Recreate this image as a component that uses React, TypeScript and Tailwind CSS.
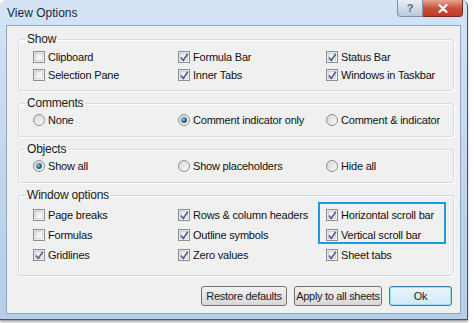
import type { ReactNode } from "react";

const font = { fontFamily: '"Liberation Sans", Arial, sans-serif' };

function CheckBox({ checked }: { checked: boolean }) {
  return (
    <span className="flex h-[12px] w-[12px] shrink-0 items-center justify-center border border-[#8e8f8f] bg-gradient-to-br from-[#dcdcdc] to-[#fbfbfb] p-[1px]">
      <span className="flex h-full w-full items-center justify-center border border-[#d4d4d4] bg-gradient-to-br from-[#e8e8e8] to-[#ffffff]">
        {checked ? (
          <svg width="9" height="9" viewBox="0 0 9 9" className="overflow-visible">
            <path d="M1 4.6 L3.3 7.4 L7.8 0.8" fill="none" stroke="#4a5f97" strokeWidth="1.6" />
          </svg>
        ) : null}
      </span>
    </span>
  );
}

function Radio({ checked }: { checked: boolean }) {
  return (
    <span className="flex h-[12px] w-[12px] shrink-0 items-center justify-center rounded-full border border-[#8e8f8f] bg-gradient-to-br from-[#d6d6d6] to-[#fbfbfb]">
      {checked ? (
        <span className="h-[6px] w-[6px] rounded-full bg-[radial-gradient(circle_at_35%_35%,#7fc7ea,#1b5f86_60%,#0f3d5a)]" />
      ) : null}
    </span>
  );
}

function Item({ label, checked, radio }: { label: string; checked: boolean; radio?: boolean }) {
  return (
    <div className="flex items-center gap-[3px] whitespace-nowrap">
      {radio ? <Radio checked={checked} /> : <CheckBox checked={checked} />}
      <span>{label}</span>
    </div>
  );
}

function Group({ title, className, children }: { title: string; className: string; children: ReactNode }) {
  return (
    <fieldset
      className={`rounded-[3px] border border-[#d5dde2] px-0 shadow-[inset_1px_1px_0_#ffffff,1px_1px_0_#ffffff] ${className}`}
    >
      <legend className="ml-[6px] px-[2px] text-[12px] leading-[14px] text-[#1a1a1a]">{title}</legend>
      {children}
    </fieldset>
  );
}

const cols = "grid grid-cols-[145px_148px_1fr] pl-[14px]";
const btn =
  "h-[20px] whitespace-nowrap rounded-[3px] border px-0 text-[11px] tracking-[-0.3px] text-[#222]";

export default function App() {
  return (
    <div
      className="h-[323px] w-[474px] overflow-hidden bg-white text-[11px] tracking-[-0.2px] text-[#111]"
      style={font}
    >
      <div className="flex h-[320px] w-[468px] flex-col rounded-t-[6px] border-r border-b border-[#4a5563] bg-gradient-to-b from-[#d4e4f5] via-[#c2d6ee] to-[#b6cde8] shadow-[0_2px_2px_rgba(0,0,0,0.35)]">
        <div className="flex h-[25px] shrink-0 items-start justify-between">
          <span className="pl-[7px] pt-[6px] text-[12px] leading-[14px] tracking-normal text-[#1e2838]">View Options</span>
          <div className="mr-[4px] flex">
            <div className="flex h-[17px] w-[26px] items-center justify-center rounded-bl-[4px] border border-t-0 border-[#7c8ea8] bg-gradient-to-b from-[#e7eef7] to-[#b9c9dd] text-[11px] font-bold text-[#5a6a80]">
              ?
            </div>
            <div className="flex h-[17px] w-[40px] items-center justify-center rounded-br-[4px] border border-t-0 border-l-0 border-[#7a2a20] bg-gradient-to-b from-[#e8a493] via-[#c7523c] to-[#c23a22]">
              <svg width="10" height="9" viewBox="0 0 10 9">
                <path d="M1.5 1 L8.5 8 M8.5 1 L1.5 8" stroke="#ffffff" strokeWidth="2.2" strokeLinecap="round" />
              </svg>
            </div>
          </div>
        </div>

        <div className="mx-[6px] mb-[5px] flex flex-1 flex-col border border-[#8ea7c4] bg-[#f0f0f0] pl-[11px] pr-[6px] pt-[6px]">
          <Group title="Show" className="h-[59px]">
            <div className={`${cols} pt-[2px]`}>
              <div className="flex h-[18px] items-center"><Item label="Clipboard" checked={false} /></div>
              <div className="flex h-[18px] items-center"><Item label="Formula Bar" checked /></div>
              <div className="flex h-[18px] items-center"><Item label="Status Bar" checked /></div>
              <div className="flex h-[18px] items-center"><Item label="Selection Pane" checked={false} /></div>
              <div className="flex h-[18px] items-center"><Item label="Inner Tabs" checked /></div>
              <div className="flex h-[18px] items-center"><Item label="Windows in Taskbar" checked /></div>
            </div>
          </Group>

          <Group title="Comments" className="mt-[5px] h-[41px]">
            <div className={`${cols} pt-[1px]`}>
              <div className="flex h-[18px] items-center"><Item radio label="None" checked={false} /></div>
              <div className="flex h-[18px] items-center"><Item radio label="Comment indicator only" checked /></div>
              <div className="flex h-[18px] items-center"><Item radio label="Comment & indicator" checked={false} /></div>
            </div>
          </Group>

          <Group title="Objects" className="mt-[5px] h-[41px]">
            <div className={`${cols} pt-[1px]`}>
              <div className="flex h-[18px] items-center"><Item radio label="Show all" checked /></div>
              <div className="flex h-[18px] items-center"><Item radio label="Show placeholders" checked={false} /></div>
              <div className="flex h-[18px] items-center"><Item radio label="Hide all" checked={false} /></div>
            </div>
          </Group>

          <Group title="Window options" className="mt-[5px] h-[88px]">
            <div className="relative pt-[3px]">
              <div className={cols}>
                <div className="flex h-[20px] items-center"><Item label="Page breaks" checked={false} /></div>
                <div className="flex h-[20px] items-center"><Item label="Rows & column headers" checked /></div>
                <div className="flex h-[20px] items-center"><Item label="Horizontal scroll bar" checked /></div>
                <div className="flex h-[20px] items-center"><Item label="Formulas" checked={false} /></div>
                <div className="flex h-[20px] items-center"><Item label="Outline symbols" checked /></div>
                <div className="flex h-[20px] items-center"><Item label="Vertical scroll bar" checked /></div>
                <div className="flex h-[20px] items-center"><Item label="Gridlines" checked /></div>
                <div className="flex h-[20px] items-center"><Item label="Zero values" checked /></div>
                <div className="flex h-[20px] items-center"><Item label="Sheet tabs" checked /></div>
              </div>
              <div className="pointer-events-none absolute left-[299px] top-[0px] h-[42px] w-[128px] border-2 border-[#1f9ad8]" />
            </div>
          </Group>

          <div className="mt-[10px] flex justify-end gap-[7px] pr-[2px]">
            <button className={`${btn} w-[86px] border-[#707070] bg-gradient-to-b from-[#f2f2f2] to-[#d8d8d8]`}>
              Restore defaults
            </button>
            <button className={`${btn} w-[88px] border-[#707070] bg-gradient-to-b from-[#f2f2f2] to-[#d8d8d8]`}>
              Apply to all sheets
            </button>
            <button
              className={`${btn} w-[63px] border-[#3c7fb1] bg-gradient-to-b from-[#eaf6fd] to-[#d0e8f6] shadow-[inset_0_0_0_1px_#9edcf7]`}
            >
              Ok
            </button>
          </div>
        </div>
      </div>
    </div>
  );
}
